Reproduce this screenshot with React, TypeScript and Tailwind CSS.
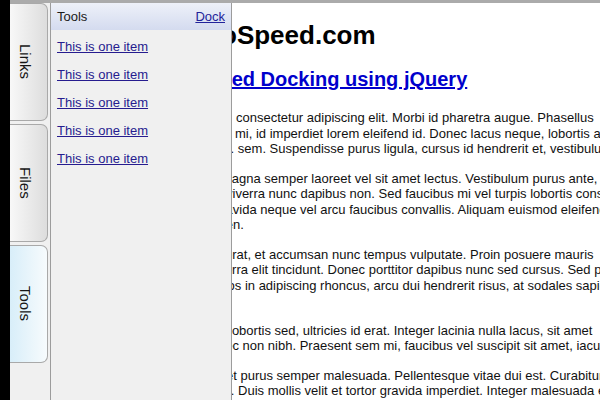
import React from 'react';

const tabs = [
  { label: 'Links', active: false },
  { label: 'Files', active: false },
  { label: 'Tools', active: true },
];

const items = ['This is one item', 'This is one item', 'This is one item', 'This is one item', 'This is one item'];

// Each paragraph is a list of lines; the start of each line runs under the panel
const paragraphs: { text: string; cls: string }[][] = [
  [
    { text: 'consectetur adipiscing elit. Morbi id pharetra augue. Phasellus', cls: 'pl-[4px]' },
    { text: 'mi, id imperdiet lorem eleifend id. Donec lacus neque, lobortis at', cls: 'pl-[3px]' },
    { text: 't. sem. Suspendisse purus ligula, cursus id hendrerit et, vestibulum', cls: '-ml-[5px]' },
  ],
  [
    { text: 'magna semper laoreet vel sit amet lectus. Vestibulum purus ante, mattis', cls: '-ml-[11px]' },
    { text: 'viverra nunc dapibus non. Sed faucibus mi vel turpis lobortis consequat', cls: '-ml-[6px]' },
    { text: 'gravida neque vel arcu faucibus convallis. Aliquam euismod eleifend', cls: '-ml-[18px]' },
    { text: 'sapien.', cls: '-ml-[30px]' },
  ],
  [
    { text: 'erat, et accumsan nunc tempus vulputate. Proin posuere mauris', cls: '-ml-[7px]' },
    { text: 'viverra elit tincidunt. Donec porttitor dapibus nunc sed cursus. Sed porta', cls: '-ml-[23px]' },
    { text: 'eros in adipiscing rhoncus, arcu dui hendrerit risus, at sodales sapien', cls: '-ml-[16px]' },
    { text: 'quis.', cls: '-ml-[40px]' },
  ],
  [
    { text: 'lobortis sed, ultricies id erat. Integer lacinia nulla lacus, sit amet', cls: '-ml-[3px]' },
    { text: 'nec non nibh. Praesent sem mi, faucibus vel suscipit sit amet, iaculis', cls: '-ml-[14px]' },
  ],
  [
    { text: 'et purus semper malesuada. Pellentesque vitae dui est. Curabitur', cls: '-ml-[6px]' },
    { text: 'at. Duis mollis velit et tortor gravida imperdiet. Integer malesuada est', cls: '-ml-[12px]' },
  ],
];

function Tab({ label, active }: { label: string; active: boolean }) {
  return (
    <div
      className={
        'h-[118px] flex items-center justify-center pr-[7px] border border-l-0 border-[#a9a9a9] rounded-r-[7px] ' +
        (active
          ? 'bg-linear-to-r from-[#d8eef9] to-[#f7fbfd]'
          : 'bg-linear-to-r from-[#f8f8f8] to-[#dddddd]')
      }
    >
      <span className="[writing-mode:vertical-rl] text-[15px] leading-[17px] text-[#151515]">{label}</span>
    </div>
  );
}

export default function App() {
  return (
    <div className="w-[600px] h-[400px] overflow-hidden flex bg-black font-['Liberation_Sans',Arial,sans-serif]">
      <div className="w-[10px] shrink-0 bg-black" />
      <div className="flex-1 min-w-0 flex border-t-[3px] border-[#ababab] bg-[#f0f0f0]">
        {/* Side tabs */}
        <div className="w-[40px] shrink-0 flex flex-col gap-[3px] pr-[2px]">
          {tabs.map((t) => (
            <Tab key={t.label} label={t.label} active={t.active} />
          ))}
        </div>

        {/* Flyout panel */}
        <div className="w-[182px] shrink-0 border-x border-[#9c9c9c] bg-[#f0f0f0] flex flex-col">
          <div className="h-[27px] flex items-center justify-between px-[6px] bg-linear-to-b from-[#eef1f9] to-[#d4dbef] text-[13px] leading-[15px]">
            <span className="text-[#1a1a1a]">Tools</span>
            <a href="#" className="text-[#22229a] underline">Dock</a>
          </div>
          <div className="flex flex-col gap-[13px] pt-[9px] px-[6px] text-[13px] leading-[15px]">
            {items.map((it, i) => (
              <a key={i} href="#" className="text-[#261c8f] underline">
                {it}
              </a>
            ))}
          </div>
        </div>

        {/* Page content */}
        <div className="flex-1 min-w-0 bg-white overflow-hidden pt-[17px] text-black">
          <h1 className="-ml-[11px] whitespace-nowrap text-[26px] leading-[30px] font-bold">oSpeed.com</h1>
          <h2 className="-ml-[7px] mt-[18px] whitespace-nowrap text-[20px] leading-[23px] font-bold">
            <a href="#" className="text-[#0000cc] underline">ted Docking using jQuery</a>
          </h2>
          <div className="mt-[19px] flex flex-col gap-[14px] text-[13px] leading-[15.5px] text-[#111]">
            {paragraphs.map((p, i) => (
              <p key={i}>
                {p.map((line, j) => (
                  <span key={j} className={'block whitespace-nowrap ' + line.cls}>
                    {line.text}
                  </span>
                ))}
              </p>
            ))}
          </div>
        </div>
      </div>
    </div>
  );
}
